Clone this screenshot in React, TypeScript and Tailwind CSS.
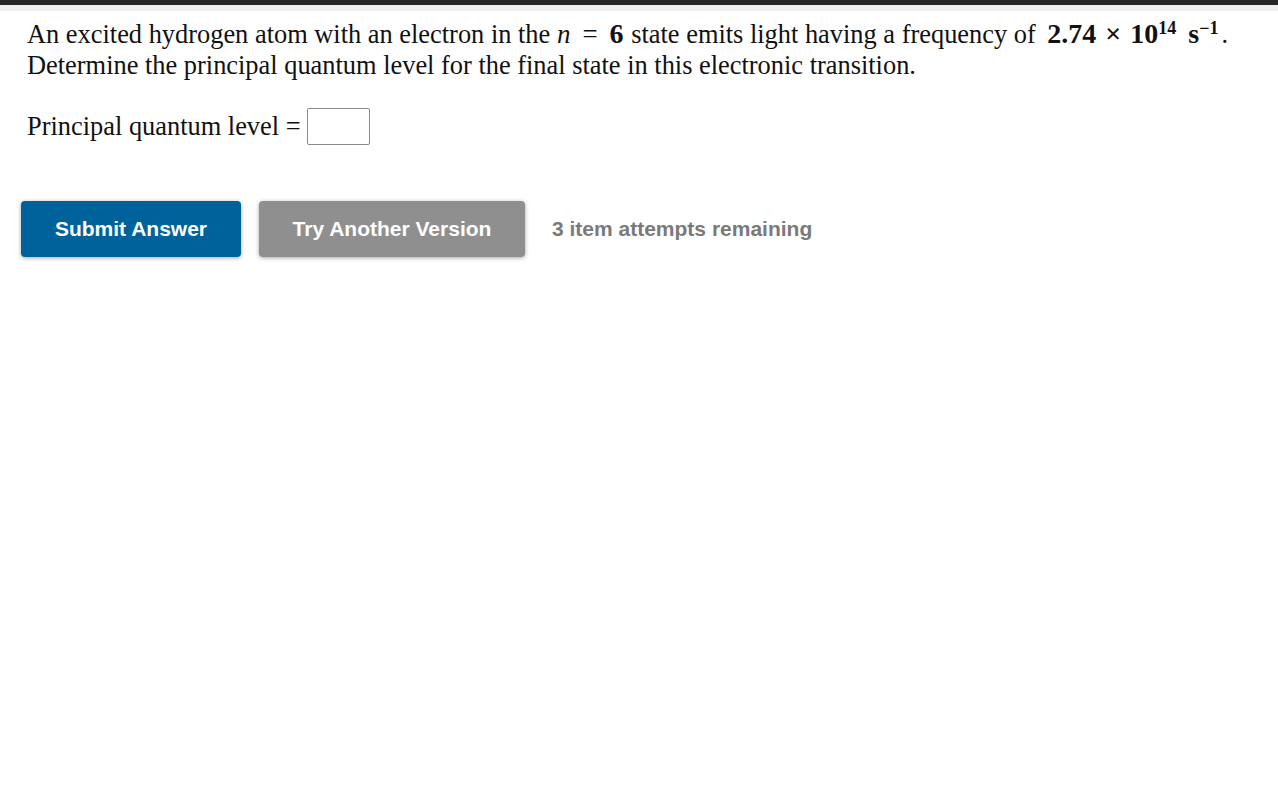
import React from "react";

export default function App() {
  const serif = { fontFamily: '"Liberation Serif", "Times New Roman", serif' };
  return (
    <div className="min-h-[800px] w-full bg-white">
      <div className="h-[5px] bg-[#262626]" />
      <div className="h-[6px] bg-[#efefef]" />
      <div className="pl-[27px] pr-4 pt-[7px] text-[26.4px] leading-[31px] text-[#111]" style={serif}>
        <p>
          An excited hydrogen atom with an electron in the{" "}
          <span className="inline-block text-[27px] leading-[31px] italic">n</span>
          <span className="mx-[12px] inline-block text-[27px] leading-[31px]">=</span>
          <span className="mr-[1px] inline-block text-[28px] leading-[31px] font-bold">6</span> state emits light having a frequency of{" "}
          <span className="ml-[5px] text-[28px] leading-[31px] font-bold">
            <span>2.74</span>
            <span className="mx-[9px]">×</span>
            <span>10</span>
            <sup className="text-[18px]">14</sup>
            <span className="ml-[12px]">s</span>
            <sup className="text-[18px]">−1</sup>
          </span>
          <span className="ml-[3px]">.</span>
          <br />
          Determine the principal quantum level for the final state in this electronic transition.
        </p>
        <div className="mt-[27px] flex items-center">
          <span>Principal quantum level =</span>
          <input
            className="ml-[6px] h-[37px] w-[63px] rounded-[2px] border border-[#8a8a8a] outline-none"
            type="text"
          />
        </div>
      </div>
      <div
        className="mt-[56px] flex items-center pl-[21px] text-[21px] font-bold"
        style={{ fontFamily: '"Liberation Sans", Arial, sans-serif' }}
      >
        <button className="h-[56px] w-[220px] rounded-[4px] bg-[#00629b] text-white shadow-[0_1px_4px_rgba(0,0,0,0.35)]">
          Submit Answer
        </button>
        <button className="ml-[18px] h-[56px] w-[266px] rounded-[4px] bg-[#8f8f8f] text-white shadow-[0_1px_4px_rgba(0,0,0,0.35)]">
          Try Another Version
        </button>
        <span className="ml-[27px] text-[#7a7a7a]">3 item attempts remaining</span>
      </div>
    </div>
  );
}
